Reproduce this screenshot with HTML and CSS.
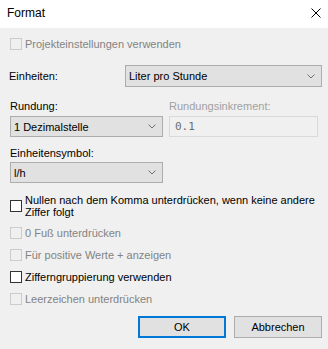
FILE: index.html
```html
<!DOCTYPE html>
<html lang="de">
<head>
    <meta charset="UTF-8">
    <meta name="viewport" content="width=device-width, initial-scale=1.0">
    <title>Format</title>
    <link rel="stylesheet" href="styles.css">
</head>
<body>
    <div class="dialog">
        <div class="titlebar">
            <span class="title">Format</span>
            <svg class="close" width="10" height="10" viewBox="0 0 10 10">
                <path d="M0.5 0.5 L9.5 9.5 M9.5 0.5 L0.5 9.5" stroke="#000" stroke-width="1" fill="none"/>
            </svg>
        </div>

        <div class="content">
            <div class="check disabled first">
                <span class="box"></span>
                <span class="text">Projekteinstellungen verwenden</span>
            </div>

            <div class="units-row">
                <span class="label">Einheiten:</span>
                <div class="select wide">
                    <span>Liter pro Stunde</span>
                    <svg class="chev" width="8" height="5" viewBox="0 0 8 5"><path d="M0.5 0.5 L4 4 L7.5 0.5" stroke="#707070" fill="none"/></svg>
                </div>
            </div>

            <div class="rounding">
                <span class="label">Rundung:</span>
                <span class="label muted">Rundungsinkrement:</span>
                <div class="select">
                    <span>1 Dezimalstelle</span>
                    <svg class="chev" width="8" height="5" viewBox="0 0 8 5"><path d="M0.5 0.5 L4 4 L7.5 0.5" stroke="#707070" fill="none"/></svg>
                </div>
                <div class="field">0.1</div>
            </div>

            <div class="symbol">
                <span class="label">Einheitensymbol:</span>
                <div class="select narrow">
                    <span>l/h</span>
                    <svg class="chev" width="8" height="5" viewBox="0 0 8 5"><path d="M0.5 0.5 L4 4 L7.5 0.5" stroke="#707070" fill="none"/></svg>
                </div>
            </div>

            <div class="check two-line">
                <span class="box"></span>
                <span class="text">Nullen nach dem Komma unterdrücken, wenn keine andere Ziffer folgt</span>
            </div>
            <div class="check disabled">
                <span class="box"></span>
                <span class="text">0 Fuß unterdrücken</span>
            </div>
            <div class="check disabled">
                <span class="box"></span>
                <span class="text">Für positive Werte + anzeigen</span>
            </div>
            <div class="check">
                <span class="box"></span>
                <span class="text">Zifferngruppierung verwenden</span>
            </div>
            <div class="check disabled">
                <span class="box"></span>
                <span class="text">Leerzeichen unterdrücken</span>
            </div>

            <div class="buttons">
                <button class="btn default">OK</button>
                <button class="btn">Abbrechen</button>
            </div>
        </div>
    </div>
</body>
</html>
```

FILE: styles.css
```css
:root {
    --dialog-bg: #f0f0f0;
    --control-bg: #e1e1e1;
    --control-border: #adadad;
    --disabled-text: #838383;
    --disabled-border: #cccccc;
    --accent: #0078d7;
}
* {
    box-sizing: border-box;
    margin: 0;
    padding: 0;
}
body {
    font-family: 'Liberation Sans', Arial, sans-serif;
    font-size: 11px;
    color: #000;
    background: var(--dialog-bg);
    width: 328px;
    height: 349px;
    overflow: hidden;
}
.dialog {
    width: 328px;
    height: 349px;
    display: flex;
    flex-direction: column;
}
.titlebar {
    height: 28px;
    background: #fff;
    display: flex;
    align-items: center;
    justify-content: space-between;
    padding: 0 7px 2px 7px;
}
.title {
    font-size: 12px;
}
.close {
    display: block;
}
.content {
    padding: 0 6px 0 10px;
    display: flex;
    flex-direction: column;
}
.label {
    line-height: 14px;
}
.muted {
    color: #a0a0a0;
}
/* checkboxes */
.check {
    display: flex;
    align-items: center;
    height: 22px;
    gap: 3px;
}
.check .box {
    width: 12px;
    height: 12px;
    flex: none;
    border: 1px solid #333;
    background: #fff;
}
.check.disabled {
    color: var(--disabled-text);
}
.check.disabled .box {
    border-color: var(--disabled-border);
    background: var(--dialog-bg);
}
.check.first {
    margin-top: 5px;
}
.check.two-line {
    height: 30px;
    margin-top: 8px;
    margin-bottom: 1px;
}
.check.two-line .text {
    line-height: 12px;
}
/* selects */
.select {
    height: 21px;
    background: var(--control-bg);
    border: 1px solid var(--control-border);
    display: flex;
    align-items: center;
    justify-content: space-between;
    padding: 0 6px 0 3px;
}
.chev {
    display: block;
}
.units-row {
    display: flex;
    align-items: center;
    justify-content: space-between;
    margin-top: 10px;
    margin-left: -1px;
}
.select.wide {
    width: 197px;
    height: 22px;
}
.rounding {
    display: grid;
    grid-template-columns: 153px 149px;
    column-gap: 6px;
    row-gap: 3px;
    margin-top: 12px;
}
.field {
    height: 21px;
    border: 1px solid #d9d9d9;
    background: var(--dialog-bg);
    color: #6d6d6d;
    font-family: 'DejaVu Sans Mono', 'Liberation Mono', monospace;
    font-size: 11px;
    display: flex;
    align-items: center;
    padding-left: 5px;
}
.symbol {
    display: flex;
    flex-direction: column;
    gap: 2px;
    margin-top: 9px;
}
.select.narrow {
    width: 153px;
}
/* buttons */
.buttons {
    display: flex;
    justify-content: flex-end;
    gap: 8px;
    margin-top: 6px;
}
.btn {
    width: 88px;
    height: 22px;
    background: var(--control-bg);
    border: 1px solid var(--control-border);
    font-family: inherit;
    font-size: 11px;
    color: #000;
}
.btn.default {
    border: 2px solid var(--accent);
}
```
